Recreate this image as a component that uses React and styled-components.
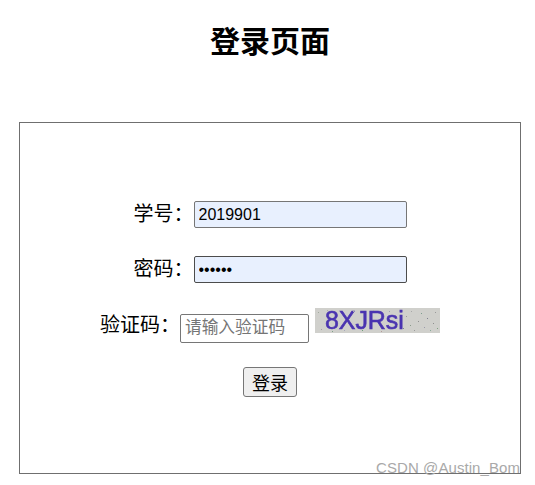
import styled, { createGlobalStyle } from "styled-components";

const FONT = '"Liberation Sans", "Noto Sans CJK SC", sans-serif';

// specks scattered over the captcha picture
const SPECKS = [
  [3, 4, "#a3ab9f"], [6, 21, "#a99fa9"], [12, 2, "#b0b0ac"], [17, 23, "#7f9f8a"],
  [29, 22, "#a9a9bb"], [38, 3, "#adadad"], [47, 22, "#6e9e78"], [58, 2, "#a9a9a9"],
  [66, 23, "#b39a9a"], [74, 3, "#9f9fb3"], [88, 20, "#7f8f7f"], [91, 8, "#9a9a9a"],
  [95, 17, "#8a9a8a"], [99, 22, "#9c9c9c"], [103, 13, "#8f8f8f"], [106, 5, "#7f9f8f"],
  [109, 19, "#9a9aaa"], [112, 10, "#7f7f8f"], [115, 22, "#8aaa9a"], [118, 15, "#8f8f8f"],
  [120, 4, "#9a9a9a"], [122, 20, "#7f9f7f"], [82, 17, "#9a9a9a"], [96, 3, "#a9a9a9"],
];

function Captcha() {
  return (
    <CaptchaBox>
      <CaptchaText>8XJRsi</CaptchaText>
      <CaptchaNoise viewBox="0 0 125 25" aria-hidden="true">
        {SPECKS.map(([x, y, fill]) => (
          <rect key={`${x}-${y}`} x={x} y={y} width="1" height="1" fill={fill} />
        ))}
      </CaptchaNoise>
    </CaptchaBox>
  );
}

export default function App() {
  return (
    <Page>
      <GlobalStyle />
      <Title>登录页面</Title>
      <FormBox>
        <Row>
          <Label>学号：</Label>
          <TextInput defaultValue="2019901" />
        </Row>
        <Row>
          <Label>密码：</Label>
          <TextInput type="password" defaultValue="123456" $dark />
        </Row>
        <CodeRow>
          <CodeLabel>验证码：</CodeLabel>
          <CodeInput placeholder="请输入验证码" />
          <Captcha />
        </CodeRow>
        <SubmitButton type="button">登录</SubmitButton>
        <Watermark>CSDN @Austin_Bom</Watermark>
      </FormBox>
    </Page>
  );
}

const GlobalStyle = createGlobalStyle`
  html, body {
    margin: 0;
    background: #fff;
    font-family: ${FONT};
  }
`;

const Page = styled.div`
  width: 535px;
  height: 485px;
  padding: 20px 14px 0 19px;
  box-sizing: border-box;
  overflow: hidden;
`;

const Title = styled.h1`
  margin: 0 0 57px;
  height: 45px;
  font-size: 30px;
  line-height: 44px;
  font-weight: 700;
  text-align: center;
  color: #000;
`;

const FormBox = styled.form`
  position: relative;
  width: 502px;
  height: 352px;
  box-sizing: border-box;
  border: 1px solid #6f6f6f;
  padding-top: 78px;
  display: flex;
  flex-direction: column;
  align-items: center;
`;

const Row = styled.div`
  display: flex;
  align-items: center;
  height: 27px;
  margin-bottom: 28px;
`;

const Label = styled.label`
  font-size: 20px;
  line-height: 27px;
  color: #000;
  white-space: nowrap;
`;

const TextInput = styled.input`
  width: 213px;
  height: 27px;
  box-sizing: border-box;
  padding: 1px 4px;
  border: 1px solid ${({ $dark }) => ($dark ? "#4c4c4c" : "#767676")};
  border-radius: 2px;
  background: #e8f0fe;
  font-family: ${FONT};
  font-size: 16px;
  color: #000;
  outline: none;
`;

const CodeRow = styled.div`
  display: flex;
  align-items: flex-start;
  height: 35px;
  margin-top: -3px;
  margin-bottom: 24px;
`;

const CodeLabel = styled(Label)`
  margin-top: 4px;
  margin-right: -1px;
  width: 81px;
`;

const CodeInput = styled.input`
  width: 129px;
  height: 29px;
  margin-top: 6px;
  box-sizing: border-box;
  padding: 0 4px 2px;
  border: 1px solid #767676;
  border-radius: 2px;
  background: #fff;
  font-family: ${FONT};
  font-size: 16.7px;
  outline: none;

  &::placeholder {
    color: #757575;
    opacity: 1;
  }
`;

const CaptchaBox = styled.div`
  position: relative;
  width: 125px;
  height: 25px;
  margin-left: 6px;
  background: #d0d0cc;
`;

const CaptchaText = styled.span`
  display: block;
  padding-left: 10px;
  font-size: 25px;
  line-height: 25px;
  letter-spacing: -0.1px;
  color: #4a34b0;
  -webkit-text-stroke: 0.6px #4a34b0;
  filter: blur(0.4px);
`;

const CaptchaNoise = styled.svg`
  position: absolute;
  inset: 0;
  width: 125px;
  height: 25px;
`;

const SubmitButton = styled.button`
  width: 54px;
  height: 30px;
  box-sizing: border-box;
  padding: 0;
  border: 1px solid #767676;
  border-radius: 3px;
  background: #efefef;
  font-family: ${FONT};
  font-size: 18px;
  color: #000;
`;

const Watermark = styled.span`
  position: absolute;
  right: 0;
  bottom: -4px;
  font-size: 15px;
  line-height: 18px;
  letter-spacing: 0.07px;
  color: #a9a9a9;
  white-space: nowrap;
`;
